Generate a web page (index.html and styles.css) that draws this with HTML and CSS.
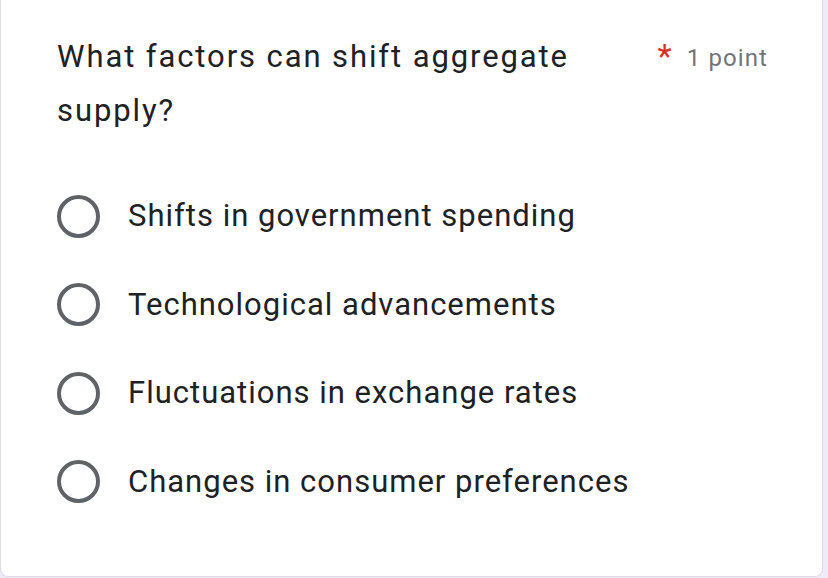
FILE: index.html
```html
<!DOCTYPE html>
<html lang="en">
<head>
  <meta charset="UTF-8">
  <meta name="viewport" content="width=device-width, initial-scale=1">
  <title>Quiz question</title>
  <link rel="stylesheet" href="styles.css">
</head>
<body>
  <!-- Question card -->
  <div class="card">
    <div class="question-header">
      <h2 class="question-title">What factors can shift aggregate supply?</h2>
      <div class="question-meta">
        <span class="required">*</span>
        <span class="points">1 point</span>
      </div>
    </div>

    <div class="options">
      <label class="option">
        <span class="radio"></span>
        <span class="option-text">Shifts in government spending</span>
      </label>
      <label class="option">
        <span class="radio"></span>
        <span class="option-text">Technological advancements</span>
      </label>
      <label class="option">
        <span class="radio"></span>
        <span class="option-text">Fluctuations in exchange rates</span>
      </label>
      <label class="option">
        <span class="radio"></span>
        <span class="option-text">Changes in consumer preferences</span>
      </label>
    </div>
  </div>
</body>
</html>
```

FILE: styles.css
```css
body {
  margin: 0;
  background-color: #f0ebf8;
  font-family: Roboto, "Liberation Sans", Arial, sans-serif;
  color: #202124;
}
.card {
  box-sizing: border-box;
  width: 823px;
  height: 577px;
  background-color: #fff;
  border: 1px solid #dadce0;
  border-top: none;
  border-radius: 0 0 8px 8px;
  padding: 30px 54px 0 56px;
}
.question-header {
  display: flex;
  align-items: flex-start;
}
.question-title {
  flex: 1;
  margin: 0;
  font-size: 31px;
  font-weight: 400;
  line-height: 54px;
  letter-spacing: 1.9px;
}
.question-meta {
  display: flex;
  align-items: flex-start;
  padding-top: 10px;
}
.required {
  color: #d93025;
  font-size: 33px;
  line-height: 30px;
  margin-top: 2px;
  margin-right: 15px;
}
.points {
  color: #70757a;
  font-size: 24px;
  line-height: 36px;
  letter-spacing: 1.1px;
}
.options {
  padding-top: 34px;
}
.option {
  display: flex;
  align-items: center;
  height: 88.5px;
  cursor: pointer;
}
.radio {
  box-sizing: border-box;
  width: 43px;
  height: 43px;
  border: 4px solid #5f6368;
  border-radius: 50%;
  margin-right: 28px;
  flex-shrink: 0;
}
.option-text {
  font-size: 31px;
  line-height: 40px;
  letter-spacing: 1px;
}
```
